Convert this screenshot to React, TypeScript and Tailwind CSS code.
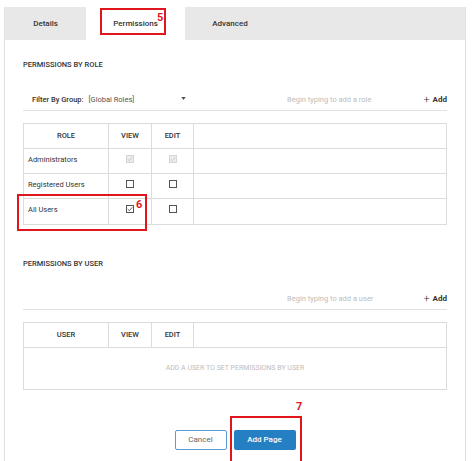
import React from "react";

type Role = { name: string; view: "on" | "off" | "locked"; edit: "on" | "off" | "locked" };

const roles: Role[] = [
  { name: "Administrators", view: "locked", edit: "locked" },
  { name: "Registered Users", view: "off", edit: "off" },
  { name: "All Users", view: "on", edit: "off" },
];

function Check({ state }: { state: "on" | "off" | "locked" }) {
  const locked = state === "locked";
  return (
    <span
      className={`inline-flex h-[8px] w-[8px] items-center justify-center border ${
        locked ? "border-[#d4d4d4] bg-[#ececec]" : "border-[#555] bg-white"
      }`}
    >
      {state !== "off" && (
        <svg viewBox="0 0 8 8" className="h-[6px] w-[6px]">
          <path d="M1 4.2 L3.1 6.2 L7 1.8" fill="none" stroke={locked ? "#c4c4c4" : "#444"} strokeWidth="1.1" />
        </svg>
      )}
    </span>
  );
}

function AddRow({ placeholder, children }: { placeholder: string; children?: React.ReactNode }) {
  return (
    <div className="flex h-[22px] items-center border-b border-[#e2e2e2] pl-[9px]">
      <div className="flex w-[262px] items-center">{children}</div>
      <div className="w-[140px] text-[7.5px] text-[#bdbdbd]">{placeholder}</div>
      <div className="ml-auto flex items-center gap-[3px] text-[8px] font-bold text-[#333]">
        <span className="text-[11px] font-light leading-none">+</span>
        <span>Add</span>
      </div>
    </div>
  );
}

function HeadRow({ first }: { first: string }) {
  return (
    <div className="flex h-[25px] items-center border-b border-[#dcdcdc] text-[7.5px] font-medium text-[#333]">
      <div className="flex h-full w-[85px] items-center justify-center border-r border-[#dcdcdc]">{first}</div>
      <div className="flex h-full w-[43px] items-center justify-center border-r border-[#dcdcdc]">VIEW</div>
      <div className="flex h-full w-[42px] items-center justify-center border-r border-[#dcdcdc]">EDIT</div>
    </div>
  );
}

export default function App() {
  return (
    <div className="relative h-[461px] w-[474px] overflow-hidden bg-white font-['Roboto',sans-serif] text-[#333]">
      <div className="ml-[4px] mt-[7px] h-[454px] w-[462px] border-x border-[#e0e0e0]">
        {/* tabs */}
        <div className="flex h-[33px] bg-[#e8e8e8] text-[8px] font-medium text-[#333]">
          <div className="flex w-[81px] items-center justify-center">Details</div>
          <div className="flex w-[99px] items-center justify-center bg-white">Permissions</div>
          <div className="flex w-[90px] items-center justify-center">Advanced</div>
        </div>

        <div className="px-[18px]">
          <div className="pt-[20px] text-[7.5px] font-medium leading-[10px] text-[#333]">PERMISSIONS BY ROLE</div>

          <div className="mt-[19px]">
            <AddRow placeholder="Begin typing to add a role">
              <span className="text-[7.5px] font-medium text-[#333]">Filter By Group:</span>
              <span className="ml-[5px] text-[7.5px] text-[#555]">[Global Roles]</span>
              <svg viewBox="0 0 6 4" className="ml-[47px] mb-[3px] h-[3px] w-[5px]">
                <path d="M0 0 H6 L3 4 Z" fill="#555" />
              </svg>
            </AddRow>
          </div>

          <div className="mt-[12px] border border-[#dcdcdc]">
            <HeadRow first="ROLE" />
            {roles.map((r, i) => (
              <div
                key={r.name}
                className={`flex h-[25px] text-[7.5px] text-[#333] ${i < roles.length - 1 ? "border-b border-[#dcdcdc]" : ""}`}
              >
                <div className="h-full w-[85px] border-r border-[#dcdcdc] pl-[4px] pt-[6px] leading-[10px]">{r.name}</div>
                <div className="flex h-full w-[43px] justify-center border-r border-[#dcdcdc] pt-[6px]">
                  <Check state={r.view} />
                </div>
                <div className="flex h-full w-[42px] justify-center border-r border-[#dcdcdc] pt-[6px]">
                  <Check state={r.edit} />
                </div>
              </div>
            ))}
          </div>

          <div className="mt-[34px] text-[7.5px] font-medium leading-[10px] text-[#333]">PERMISSIONS BY USER</div>

          <div className="mt-[19px]">
            <AddRow placeholder="Begin typing to add a user" />
          </div>

          <div className="mt-[12px] border border-[#dcdcdc]">
            <HeadRow first="USER" />
            <div className="flex h-[41px] items-center justify-center text-[7px] text-[#bdbdbd]">
              ADD A USER TO SET PERMISSIONS BY USER
            </div>
          </div>

          <div className="mt-[40px] flex justify-center gap-[7px] text-[8px]">
            <button className="h-[20px] w-[52px] rounded-[2px] border border-[#5b9bd5] bg-white text-[#666]">Cancel</button>
            <button className="h-[20px] w-[62px] rounded-[2px] bg-[#2580c3] font-medium text-white">Add Page</button>
          </div>
        </div>
      </div>

      {/* annotations */}
      <div className="absolute left-[100px] top-[8px] h-[27px] w-[66px] border-2 border-[#e0161c]" />
      <div className="absolute left-[157px] top-[12px] text-[11px] font-bold leading-none text-[#e0161c]">5</div>
      <div className="absolute left-[17px] top-[194px] h-[37px] w-[130px] border-2 border-[#e0161c]" />
      <div className="absolute left-[136px] top-[199px] text-[11px] font-bold leading-none text-[#e0161c]">6</div>
      <div className="absolute left-[230px] top-[416px] h-[50px] w-[72px] border-2 border-[#e0161c]" />
      <div className="absolute left-[296px] top-[401px] text-[11px] font-bold leading-none text-[#e0161c]">7</div>
    </div>
  );
}
